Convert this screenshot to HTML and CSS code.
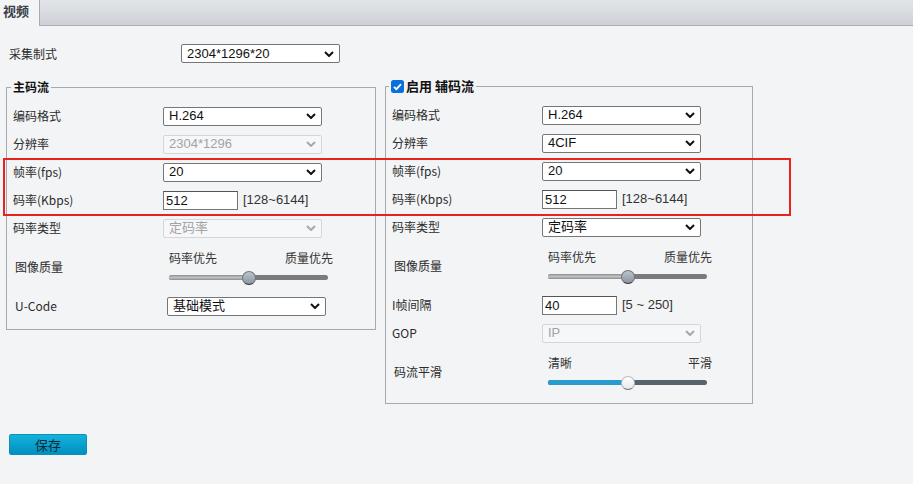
FILE: index.html
```html
<!DOCTYPE html>
<html lang="zh-CN">
<head>
    <meta charset="UTF-8">
    <title>视频</title>
    <link rel="stylesheet" href="styles.css">
</head>
<body>
    <div class="tab-bar">
        <div class="tab active-tab">视频</div>
        <div class="tab-rest"></div>
    </div>

    <div class="content">
        <div class="top-row">
            <span class="lbl">采集制式</span>
            <div class="sel">2304*1296*20<svg class="chev" viewBox="0 0 10 6"><path d="M1 1l4 4 4-4"/></svg></div>
        </div>

        <div class="groups">
            <fieldset class="group group-main">
                <legend>主码流</legend>
                <div class="frow">
                    <span class="lbl">编码格式</span>
                    <div class="sel">H.264<svg class="chev" viewBox="0 0 10 6"><path d="M1 1l4 4 4-4"/></svg></div>
                </div>
                <div class="frow">
                    <span class="lbl">分辨率</span>
                    <div class="sel disabled">2304*1296<svg class="chev" viewBox="0 0 10 6"><path d="M1 1l4 4 4-4"/></svg></div>
                </div>
                <div class="frow">
                    <span class="lbl">帧率(fps)</span>
                    <div class="sel">20<svg class="chev" viewBox="0 0 10 6"><path d="M1 1l4 4 4-4"/></svg></div>
                </div>
                <div class="frow">
                    <span class="lbl">码率(Kbps)</span>
                    <div class="txt">512</div>
                    <span class="range">[128~6144]</span>
                </div>
                <div class="frow">
                    <span class="lbl">码率类型</span>
                    <div class="sel disabled">定码率<svg class="chev" viewBox="0 0 10 6"><path d="M1 1l4 4 4-4"/></svg></div>
                </div>
                <div class="frow slider-row">
                    <span class="lbl lbl-shift">图像质量</span>
                    <div class="slider">
                        <div class="slider-ends"><span>码率优先</span><span>质量优先</span></div>
                        <div class="track track-gray">
                            <div class="fill" style="width: 50%"></div>
                            <div class="thumb" style="left: 50%"></div>
                        </div>
                    </div>
                </div>
                <div class="frow">
                    <span class="lbl lbl-shift">U-Code</span>
                    <div class="sel sel-shift">基础模式<svg class="chev" viewBox="0 0 10 6"><path d="M1 1l4 4 4-4"/></svg></div>
                </div>
            </fieldset>

            <fieldset class="group group-sub">
                <legend>
                    <svg class="check" viewBox="0 0 13 13"><rect width="13" height="13" rx="2.5"/><path d="M3 6.8l2.4 2.4 4.6-5"/></svg>
                    启用 辅码流
                </legend>
                <div class="frow">
                    <span class="lbl">编码格式</span>
                    <div class="sel">H.264<svg class="chev" viewBox="0 0 10 6"><path d="M1 1l4 4 4-4"/></svg></div>
                </div>
                <div class="frow">
                    <span class="lbl">分辨率</span>
                    <div class="sel">4CIF<svg class="chev" viewBox="0 0 10 6"><path d="M1 1l4 4 4-4"/></svg></div>
                </div>
                <div class="frow">
                    <span class="lbl">帧率(fps)</span>
                    <div class="sel">20<svg class="chev" viewBox="0 0 10 6"><path d="M1 1l4 4 4-4"/></svg></div>
                </div>
                <div class="frow">
                    <span class="lbl">码率(Kbps)</span>
                    <div class="txt">512</div>
                    <span class="range">[128~6144]</span>
                </div>
                <div class="frow">
                    <span class="lbl">码率类型</span>
                    <div class="sel">定码率<svg class="chev" viewBox="0 0 10 6"><path d="M1 1l4 4 4-4"/></svg></div>
                </div>
                <div class="frow slider-row">
                    <span class="lbl lbl-shift">图像质量</span>
                    <div class="slider">
                        <div class="slider-ends"><span>码率优先</span><span>质量优先</span></div>
                        <div class="track track-gray">
                            <div class="fill" style="width: 50%"></div>
                            <div class="thumb" style="left: 50%"></div>
                        </div>
                    </div>
                </div>
                <div class="frow">
                    <span class="lbl">I帧间隔</span>
                    <div class="txt">40</div>
                    <span class="range">[5 ~ 250]</span>
                </div>
                <div class="frow">
                    <span class="lbl">GOP</span>
                    <div class="sel disabled">IP<svg class="chev" viewBox="0 0 10 6"><path d="M1 1l4 4 4-4"/></svg></div>
                </div>
                <div class="frow slider-row">
                    <span class="lbl lbl-shift">码流平滑</span>
                    <div class="slider">
                        <div class="slider-ends"><span>清晰</span><span>平滑</span></div>
                        <div class="track track-blue">
                            <div class="fill" style="width: 50%"></div>
                            <div class="thumb" style="left: 50%"></div>
                        </div>
                    </div>
                </div>
            </fieldset>
        </div>

        <button class="save-button">保存</button>
    </div>

    <div class="highlight"></div>
</body>
</html>
```

FILE: styles.css
```css
body {
    margin: 0;
    padding: 0;
    background-color: #f3f4f6;
    color: #2b2b2b;
    font-family: "Noto Sans CJK SC", "Noto Sans", sans-serif;
    font-size: 12px;
    line-height: 16px;
    position: relative;
    width: 913px;
    height: 484px;
    overflow: hidden;
}
.tab-bar {
    display: flex;
    height: 26px;
}
.tab {
    width: 40px;
    box-sizing: border-box;
    padding: 3px 0 0 3px;
    font-size: 13px;
    font-weight: bold;
    color: #3a3f48;
}
.active-tab {
    background-color: #f3f4f6;
    border-right: 1px solid #a9adb3;
}
.tab-rest {
    flex: 1;
    background: linear-gradient(#e2e5e8, #cdd1d6);
    border-bottom: 1px solid #a9adb3;
}
.content {
    padding: 0 6px;
}
.top-row {
    display: flex;
    align-items: center;
    height: 19px;
    margin-top: 18px;
    padding-left: 3px;
}
.top-row .lbl {
    width: 172px;
}
.groups {
    display: flex;
    align-items: flex-start;
    gap: 9px;
    margin-top: 16px;
}
.group {
    margin: 0;
    padding: 7px 0 6px 6px;
    border: 1px solid #a7a9ac;
    min-width: 0;
    box-sizing: border-box;
}
.group-main {
    width: 370px;
    padding-bottom: 9px;
}
.group-sub {
    width: 368px;
    margin-top: -1px;
}
legend {
    margin-left: -2px;
    padding: 0 2px;
    font-weight: bold;
    color: #111;
    line-height: 16px;
    display: flex;
    align-items: center;
    gap: 2px;
}
.group-sub legend {
    margin-left: -3px;
    font-size: 13px;
}
.check {
    width: 13px;
    height: 13px;
}
.check rect {
    fill: #0b6fde;
}
.check path {
    fill: none;
    stroke: white;
    stroke-width: 1.8;
}
.frow {
    display: flex;
    align-items: center;
    height: 28px;
}
.lbl {
    width: 150px;
    flex-shrink: 0;
}
.lbl-shift {
    padding-left: 2px;
    width: 148px;
}
.sel {
    width: 159px;
    height: 19px;
    box-sizing: border-box;
    border: 1px solid #767676;
    border-radius: 2px;
    background-color: white;
    display: flex;
    align-items: center;
    justify-content: space-between;
    padding: 0 5px 0 5px;
    font-family: "Liberation Sans", "Noto Sans CJK SC", sans-serif;
    font-size: 13px;
    color: #111;
}
.sel-shift {
    margin-left: 4px;
}
.chev {
    width: 10px;
    height: 6px;
    fill: none;
    stroke: #111;
    stroke-width: 2;
}
.disabled {
    background-color: #f6f7f8;
    border-color: #d4d7da;
    color: #a3a3a3;
}
.disabled .chev {
    stroke: #a8a8a8;
}
.txt {
    width: 75px;
    height: 19px;
    box-sizing: border-box;
    border: 1px solid #767676;
    border-top-color: #555;
    background-color: white;
    padding-left: 2px;
    font-family: "Liberation Sans", sans-serif;
    font-size: 13px;
    line-height: 17px;
    color: #111;
}
.range {
    margin-left: 5px;
    font-family: "Liberation Sans", sans-serif;
    font-size: 13px;
    color: #333;
}
.slider-row {
    height: 50px;
}
.slider {
    width: 164px;
    margin-left: 6px;
    align-self: flex-start;
    padding-top: 8px;
}
.slider-ends {
    display: flex;
    justify-content: space-between;
    color: #333;
}
.track {
    position: relative;
    width: 159px;
    height: 5px;
    border-radius: 3px;
    margin-top: 9px;
}
.fill {
    height: 100%;
    border-radius: 3px 0 0 3px;
}
.thumb {
    position: absolute;
    top: 50%;
    width: 14px;
    height: 14px;
    margin: -7px 0 0 -7px;
    border-radius: 50%;
    box-sizing: border-box;
}
.track-gray {
    background-color: #7b7b7b;
}
.track-gray .fill {
    background: linear-gradient(#8e8e8e, #c2c2c2 50%, #8e8e8e);
}
.track-gray .thumb {
    background: linear-gradient(#bcc3ca, #8b96a1);
    border: 1px solid #6e7680;
    border-bottom-color: #2e3237;
}
.track-blue {
    background-color: #56636e;
}
.track-blue .fill {
    background-color: #2a9bcf;
}
.track-blue .thumb {
    background: linear-gradient(#ffffff, #e6e8ea);
    border: 1px solid #b8bcc0;
    border-bottom-color: #6b7278;
}
.save-button {
    margin: 30px 0 0 3px;
    width: 78px;
    height: 21px;
    border: 1px solid #0e8fb8;
    border-radius: 2px;
    background: linear-gradient(#14b2de, #0090bf);
    color: #0c2a33;
    font-family: "Noto Sans CJK SC", sans-serif;
    font-size: 13px;
    line-height: 17px;
    padding: 0;
    cursor: pointer;
}
.highlight {
    position: absolute;
    left: 3px;
    top: 158px;
    width: 788px;
    height: 58px;
    box-sizing: border-box;
    border: 2px solid #e8231e;
}
```
